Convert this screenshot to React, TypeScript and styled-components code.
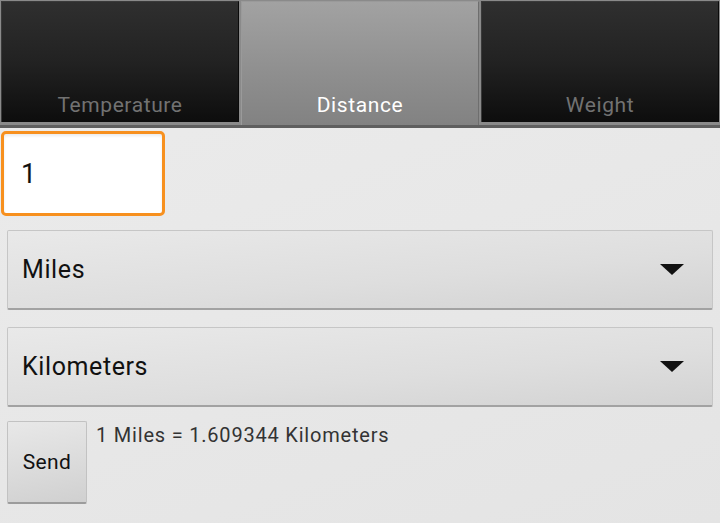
import React, {useState} from 'react';
import styled, {createGlobalStyle} from 'styled-components';

const GlobalStyle = createGlobalStyle`
    html, body {
        margin: 0;
        padding: 0;
        width: 720px;
        height: 523px;
        overflow: hidden;
        background: #e8e8e8;
        font-family: Roboto, 'Noto Sans', sans-serif;
    }
`;

const Screen = styled.div`
    width: 720px;
    height: 523px;
    background: linear-gradient(160deg, #ececec 0%, #e8e8e8 50%, #e4e4e4 100%);
    display: flex;
    flex-direction: column;
`;

const TabBar = styled.div`
    display: flex;
    align-items: flex-start;
    gap: 2px;
    padding: 1px 1px 0 1px;
    background: #8a8a8a;
    border-bottom: 3px solid #5f5f5f;
    height: 128px;
    box-sizing: border-box;
    flex-shrink: 0;
`;

const Tab = styled.div<{ $active?: boolean }>`
    flex: 1;
    height: ${p => p.$active ? '124px' : '121px'};
    display: flex;
    align-items: flex-end;
    justify-content: center;
    padding-bottom: ${p => p.$active ? '8px' : '5px'};
    box-sizing: border-box;
    font-size: 21px;
    letter-spacing: 0.6px;
    color: ${p => p.$active ? '#ffffff' : '#727272'};
    background: ${p => p.$active
        ? 'linear-gradient(180deg, #a2a2a2 0%, #8e8e8e 60%, #828282 100%)'
        : 'linear-gradient(180deg, #2f2f2f 0%, #222 50%, #0d0d0d 100%)'};
    border: 1px solid ${p => p.$active ? '#9a9a9a' : '#3a3a3a'};
    border-right-color: ${p => p.$active ? '#6e6e6e' : '#0a0a0a'};
    border-bottom: none;
`;

const Content = styled.div`
    display: flex;
    flex-direction: column;
    padding: 3px 7px 0 7px;
`;

const NumberInput = styled.input`
    width: 164px;
    height: 85px;
    margin-left: -6px;
    box-sizing: border-box;
    border: 3px solid #f7901e;
    border-radius: 5px;
    background: #fff;
    box-shadow: inset 0 2px 3px rgba(0, 0, 0, 0.08);
    padding: 0 0 0 17px;
    font-family: Roboto, 'Noto Sans', sans-serif;
    font-size: 27px;
    color: #111;
    outline: none;
`;

const Spinner = styled.div<{ $top: number }>`
    margin-top: ${p => p.$top}px;
    height: 80px;
    box-sizing: border-box;
    display: flex;
    align-items: center;
    justify-content: space-between;
    padding: 0 28px 0 14px;
    background: linear-gradient(175deg, #e9e9e9 0%, #dedede 60%, #d3d3d3 100%);
    border: 1px solid #c6c6c6;
    border-bottom: 2px solid #a2a2a2;
    border-radius: 2px;
    font-size: 25px;
    letter-spacing: 0.6px;
    color: #111;
`;

const Arrow = styled.div`
    width: 0;
    height: 0;
    border-left: 12px solid transparent;
    border-right: 12px solid transparent;
    border-top: 11px solid #111;
`;

const BottomRow = styled.div`
    display: flex;
    align-items: flex-start;
    gap: 9px;
    margin-top: 14px;
`;

const SendButton = styled.button`
    width: 80px;
    height: 83px;
    box-sizing: border-box;
    background: linear-gradient(170deg, #e8e8e8 0%, #dadada 60%, #d0d0d0 100%);
    border: 1px solid #c2c2c2;
    border-bottom: 2px solid #9c9c9c;
    border-radius: 2px;
    font-family: Roboto, 'Noto Sans', sans-serif;
    font-size: 21px;
    letter-spacing: 0.4px;
    color: #111;
    padding: 0;
`;

const Result = styled.div`
    font-size: 20px;
    letter-spacing: 0.8px;
    color: #333;
    margin-top: 2px;
`;

const App = () => {
    const [value, setValue] = useState('1');

    return (
        <Screen>
            <GlobalStyle/>
            <TabBar>
                <Tab>Temperature</Tab>
                <Tab $active>Distance</Tab>
                <Tab>Weight</Tab>
            </TabBar>
            <Content>
                <NumberInput value={value} onChange={e => setValue(e.target.value)}/>
                <Spinner $top={14}>
                    Miles
                    <Arrow/>
                </Spinner>
                <Spinner $top={17}>
                    Kilometers
                    <Arrow/>
                </Spinner>
                <BottomRow>
                    <SendButton>Send</SendButton>
                    <Result>1 Miles = 1.609344 Kilometers</Result>
                </BottomRow>
            </Content>
        </Screen>
    );
};

export default App;
